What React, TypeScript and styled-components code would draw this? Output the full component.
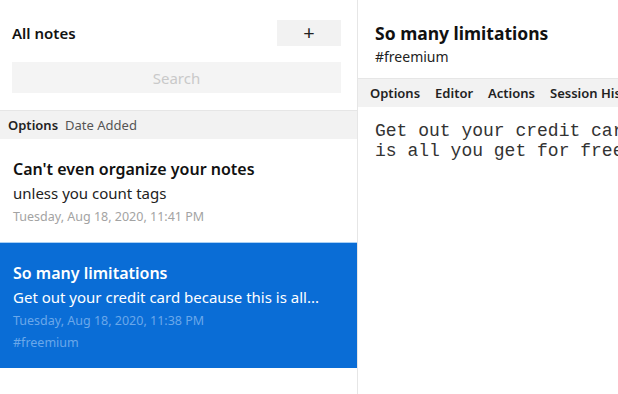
import React from "react";
import styled, { createGlobalStyle } from "styled-components";

const GlobalStyle = createGlobalStyle`
  html, body, #root {
    margin: 0;
    padding: 0;
    height: 100%;
  }
  body {
    font-family: "Noto Sans", "Open Sans", sans-serif;
    background: #ffffff;
    color: #111;
    overflow: hidden;
  }
`;

interface INote {
  id: string;
  title: string;
  body: string;
  date: string;
  tag?: string;
}

const notes: INote[] = [
  {
    id: "1",
    title: "Can't even organize your notes",
    body: "unless you count tags",
    date: "Tuesday, Aug 18, 2020, 11:41 PM",
  },
  {
    id: "2",
    title: "So many limitations",
    body: "Get out your credit card because this is all...",
    date: "Tuesday, Aug 18, 2020, 11:38 PM",
    tag: "#freemium",
  },
];

function App() {
  const selected = "2";

  return (
    <Layout>
      <GlobalStyle />
      <Sidebar>
        <SideHeader>
          <TitleRow>
            <SideTitle>All notes</SideTitle>
            <AddButton>+</AddButton>
          </TitleRow>
          <SearchBox placeholder="Search" />
        </SideHeader>
        <OptionsBar>
          <b>Options</b>
          <span>Date Added</span>
        </OptionsBar>
        {notes.map((n) => (
          <NoteItem key={n.id} $active={n.id === selected}>
            <h3>{n.title}</h3>
            <p>{n.body}</p>
            <small>{n.date}</small>
            {n.tag ? <small className="tag">{n.tag}</small> : null}
          </NoteItem>
        ))}
      </Sidebar>

      <Main>
        <MainHeader>
          <h2>So many limitations</h2>
          <span>#freemium</span>
        </MainHeader>
        <Toolbar>
          <span>Options</span>
          <span>Editor</span>
          <span>Actions</span>
          <span>Session History</span>
        </Toolbar>
        <Editor>
          Get out your credit card because this
          <br />
          is all you get for free
        </Editor>
      </Main>
    </Layout>
  );
}

export default App;

const Layout = styled.div`
  display: flex;
  height: 394px;
  width: 618px;
  overflow: hidden;
`;

const Sidebar = styled.div`
  width: 357px;
  flex-shrink: 0;
  border-right: 1px solid #e6e6e6;
  display: flex;
  flex-direction: column;
`;

const SideHeader = styled.div`
  padding: 20px 16px 17px 12px;
  display: flex;
  flex-direction: column;
  gap: 16px;
`;

const TitleRow = styled.div`
  display: flex;
  align-items: center;
  justify-content: space-between;
`;

const SideTitle = styled.h1`
  margin: 0;
  font-size: 15px;
  font-weight: 600;
  color: #111;
`;

const AddButton = styled.button`
  width: 64px;
  height: 26px;
  border: none;
  background: #f2f2f2;
  font-family: inherit;
  font-size: 20px;
  line-height: 20px;
  color: #222;
  padding: 0;
`;

const SearchBox = styled.input`
  height: 31px;
  border: none;
  background: #f4f4f4;
  text-align: center;
  font-family: inherit;
  font-size: 15px;
  padding: 0;
  outline: none;

  &::placeholder {
    color: #c9c9c9;
  }
`;

const OptionsBar = styled.div`
  height: 28px;
  display: flex;
  align-items: center;
  gap: 7px;
  padding-left: 8px;
  background: #f2f2f2;
  border-top: 1px solid #e6e6e6;
  font-size: 13px;

  b {
    font-weight: 600;
    color: #222;
  }
  span {
    color: #555;
  }
`;

const NoteItem = styled.div<{ $active: boolean }>`
  padding: ${(p) => (p.$active ? "18px 13px 14px" : "17px 13px 14px")};
  background: ${(p) => (p.$active ? "#0a6dd6" : "#fff")};
  border-top: 1px solid ${(p) => (p.$active ? "#a9d0f5" : "transparent")};
  display: flex;
  flex-direction: column;

  h3 {
    margin: 0;
    font-size: 16px;
    font-weight: 600;
    line-height: 24px;
    color: ${(p) => (p.$active ? "#fff" : "#111")};
  }

  p {
    margin: 0;
    font-size: 15px;
    line-height: 25px;
    color: ${(p) => (p.$active ? "#fff" : "#222")};
  }

  small {
    font-size: 12.5px;
    line-height: 22px;
    color: ${(p) => (p.$active ? "#6aa8ea" : "#a3a3a3")};
  }
`;

const Main = styled.div`
  flex: 1;
  min-width: 0;
  display: flex;
  flex-direction: column;
`;

const MainHeader = styled.div`
  padding: 20px 17px 10px;
  display: flex;
  flex-direction: column;

  h2 {
    margin: 0;
    font-size: 17.5px;
    font-weight: 700;
    line-height: 26px;
    color: #111;
  }
  span {
    font-size: 14px;
    line-height: 22px;
    color: #222;
  }
`;

const Toolbar = styled.div`
  height: 28px;
  display: flex;
  align-items: center;
  gap: 15px;
  padding-left: 12px;
  background: #f2f2f2;
  border-top: 1px solid #e6e6e6;
  font-size: 13px;
  font-weight: 600;
  color: #222;
  white-space: nowrap;
`;

const Editor = styled.div`
  padding: 14px 17px;
  font-family: "Liberation Mono", "Courier New", monospace;
  font-size: 18px;
  line-height: 20px;
  color: #333;
  white-space: nowrap;
`;
